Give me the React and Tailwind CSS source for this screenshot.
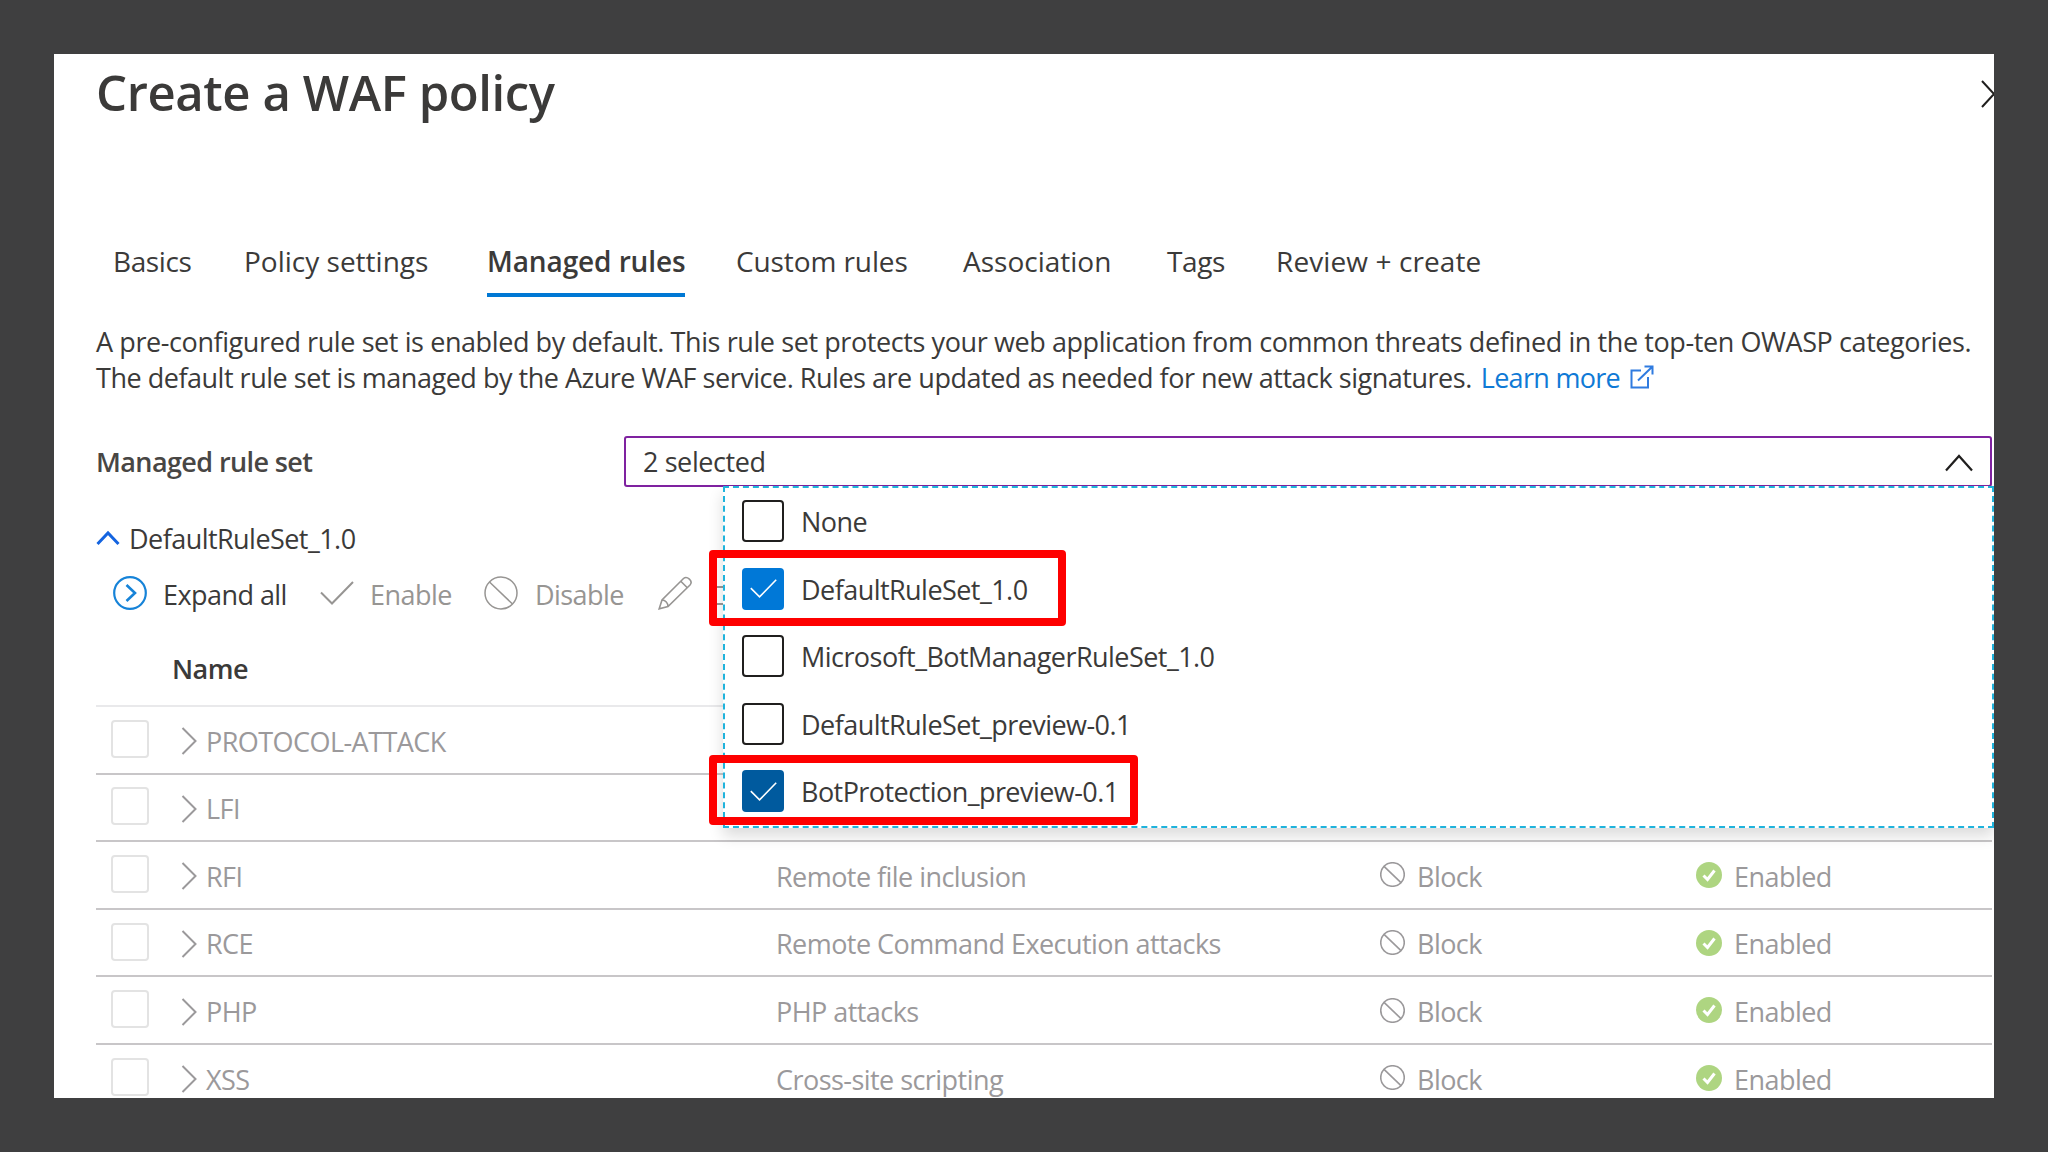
import { useState } from "react";
import clsx from "clsx";

const tabs = [
  { label: "Basics", width: "w-[131px] tracking-[-0.4px]" },
  { label: "Policy settings", width: "w-[243px]" },
  { label: "Managed rules", width: "w-[249px]" },
  { label: "Custom rules", width: "w-[227px] tracking-[-0.1px]" },
  { label: "Association", width: "w-[204px]" },
  { label: "Tags", width: "w-[109px] tracking-[-0.4px]" },
  { label: "Review + create", width: "w-[220px] tracking-[0.1px]" },
];

const ruleSets = [
  { name: "None", checked: false },
  { name: "DefaultRuleSet_1.0", checked: true, color: "bg-[#0078d7]" },
  { name: "Microsoft_BotManagerRuleSet_1.0", checked: false },
  { name: "DefaultRuleSet_preview-0.1", checked: false },
  { name: "BotProtection_preview-0.1", checked: true, color: "bg-[#005a9e]" },
];

const rules = [
  { name: "PROTOCOL-ATTACK" },
  { name: "LFI" },
  { name: "RFI", description: "Remote file inclusion" },
  { name: "RCE", description: "Remote Command Execution attacks" },
  { name: "PHP", description: "PHP attacks" },
  { name: "XSS", description: "Cross-site scripting" },
];

function BlockIcon({ className, strokeWidth }) {
  return (
    <svg viewBox="0 0 34 34" fill="none" stroke="currentColor" strokeWidth={strokeWidth} className={className}>
      <circle cx="17" cy="17" r="16" />
      <path d="M5.5 6 28.5 28" />
    </svg>
  );
}

function CheckIcon({ className }) {
  return (
    <svg viewBox="0 0 34 24" fill="none" stroke="currentColor" strokeWidth="2" className={className}>
      <path d="M1 11.5 12 22.5 33 1" />
    </svg>
  );
}

function Toolbar() {
  return (
    <div className="flex h-[70px] shrink-0 items-center pl-[17px] text-[#979593]">
      <svg viewBox="0 0 34 34" fill="none" stroke="#1683d8" strokeWidth="2.2" className="size-[34px]">
        <circle cx="17" cy="17" r="15.8" />
        <path d="M13.5 9 22 17l-8.500 8" strokeWidth="2.6" />
      </svg>
      <span className="ml-[16px] w-[157px] pt-[5px] text-[#3b3a39]">Expand all</span>
      <CheckIcon className="h-6 w-[34px]" />
      <span className="ml-[16px] w-[114px] pt-[5px]">Enable</span>
      <BlockIcon className="size-[34px]" strokeWidth="1.5" />
      <span className="ml-[17px] w-[123px] pt-[5px]">Disable</span>
      <svg viewBox="0 0 34 34" fill="none" stroke="currentColor" strokeWidth="1.6" className="size-[34px]">
        <path d="M1.200 32.800 4 24 25.500 2.500C29 -.5 35.500 5 32 9L10 30.500ZM4 24c3.500 0 6 3 6 6.500M22.800 5.200l6.500 6.500" />
      </svg>
      {/* first glyph of the next command, mostly covered by the open menu */}
      <svg viewBox="0 0 32 20" fill="none" stroke="#797775" strokeWidth="1.500" className="ml-[18px] mt-[4px] h-5 w-8">
        <path d="M1 2h30v17H1z" />
      </svg>
    </div>
  );
}

function RuleRow({ name, description }) {
  return (
    <div className="flex h-[67.600px] shrink-0 items-center border-b-2 border-[#c8c6c8] pl-[15px] text-[#9b999b]">
      <span className="mb-[2px] size-[38px] rounded-[4px] border-2 border-[#e3e3e3]"></span>
      <svg viewBox="0 0 16 28" fill="none" stroke="currentColor" strokeWidth="2" className="ml-[32px] mt-[3px] h-7 w-4">
        <path d="M1.500 1 14.500 14 1.500 27" />
      </svg>
      <span className="ml-[9px] w-[570px] pt-[4px]">{name}</span>
      <span className="w-[604px] pt-[4px]">{description}</span>
      <BlockIcon className="size-[25px]" strokeWidth="2.200" />
      <span className="ml-[12px] w-[279px] pt-[4px]">Block</span>
      <svg viewBox="0 0 26 26" className="size-[26px]">
        <circle cx="13" cy="13" r="13" fill="#aed581" />
        <path d="M7.500 13.500 11.500 17.500 18.500 8.500" fill="none" stroke="#fff" strokeWidth="3" />
      </svg>
      <span className="ml-[12px] pt-[4px]">Enabled</span>
    </div>
  );
}

function RuleSetMenu({ items, onToggle }) {
  return (
    <div className="absolute left-[97px] top-[48px] z-10 h-[342px] w-[1271px] border-2 border-dashed border-[#1fb3dc] bg-white pl-[17px] pt-[12px] shadow-[0_8px_14px_rgba(0,0,0,0.14)]">
      {items.map((item, i) => (
        <div key={item.name} onClick={() => onToggle(i)} className="flex h-[67.600px] items-start">
          <span
            className={clsx(
              "flex size-[42px] items-center justify-center rounded-[4px]",
              item.checked ? item.color : "border-2 border-[#201f1e]"
            )}
          >
            {item.checked && <CheckIcon className="w-[27px] text-white" />}
          </span>
          <span className="ml-[17px] leading-[44px]">{item.name}</span>
        </div>
      ))}
      {/* callouts around the two rule sets to pick */}
      <div className="absolute left-[-16px] top-[62px] h-[76px] w-[357px] rounded-[4px] border-8 border-[#fe0000]"></div>
      <div className="absolute left-[-16px] top-[267px] h-[70px] w-[429px] rounded-[4px] border-8 border-[#fe0000]"></div>
    </div>
  );
}

export default function App() {
  const [items, setItems] = useState(ruleSets);

  const toggle = (index) => {
    setItems(items.map((item, i) => (i === index ? { ...item, checked: !item.checked, color: "bg-[#0078d7]" } : item)));
  };

  return (
    <div className="h-[1152px] w-[2048px] bg-[#3f3f40] p-[54px] font-['Open_Sans','Noto_Sans',sans-serif] text-[27px] tracking-[-0.55px] text-[#3b3a39]">
      <div className="flex h-[1044px] w-[1940px] flex-col overflow-hidden whitespace-nowrap bg-white pl-[42px]">
        <header className="flex h-[68px] shrink-0 items-start justify-between pt-[8px]">
          <h1 className="text-[49px] font-semibold leading-[60px] tracking-[-0.4px]">Create a WAF policy</h1>
          <svg viewBox="0 0 26 28" fill="none" stroke="#201f1e" strokeWidth="2" className="mr-[-13px] mt-[18px] h-7 w-[26px]">
            <path d="M1 1 25 27M25 1 1 27" />
          </svg>
        </header>

        <nav className="mt-[107px] flex h-[68px] shrink-0 pl-[17px] text-[28px] tracking-normal">
          {tabs.map((tab) => (
            <div key={tab.label} className={tab.width}>
              {tab.label === "Managed rules" ? (
                <span className="inline-block h-[68px] w-[198px] border-b-4 border-[#0078d4] font-semibold leading-[64px] tracking-[-0.1px]">
                  {tab.label}
                </span>
              ) : (
                <span className="leading-[64px]">{tab.label}</span>
              )}
            </div>
          ))}
        </nav>

        <p className="mt-[27px] leading-[36px] tracking-[-0.41px]">
          A pre-configured rule set is enabled by default. This rule set protects your web application from common
          threats defined in the top-ten OWASP categories.
          <br />
          <span className="tracking-[-0.48px]">
            The default rule set is managed by the Azure WAF service. Rules are updated as needed for new attack
            signatures.
          </span>
          <a className="ml-[9px] tracking-[-0.7px] text-[#0f7ad6]">Learn more</a>
          <svg viewBox="0 0 24 24" fill="none" stroke="#2f7be0" strokeWidth="2" className="ml-[10px] inline-block size-6 align-[-1px]">
            <path d="M11 5.500H1.500V22.500H18V12M8 15.500 22 2M14.500 1.500H22.500V9.500" />
          </svg>
        </p>

        <div className="mt-[40px] flex h-[51px] shrink-0 items-center">
          <span className="w-[528px] pt-[2px] font-semibold tracking-[-0.6px] text-[#484644]">Managed rule set</span>
          <div className="relative flex h-[51px] w-[1368px] items-center justify-between rounded-[3px] border-2 border-[#7f22a0] pl-[17px] pr-[17px]">
            <span className="pt-[2px] tracking-[-0.4px]">2 selected</span>
            <svg viewBox="0 0 28 18" fill="none" stroke="#201f1e" strokeWidth="2.200" className="mt-[3px] h-[18px] w-7">
              <path d="M1 16.500 14 2 27 16.500" />
            </svg>
            <RuleSetMenu items={items} onToggle={toggle} />
          </div>
        </div>

        <div className="mt-[31px] flex h-10 shrink-0 items-center">
          <svg viewBox="0 0 24 16" fill="none" stroke="#1464e0" strokeWidth="3" className="h-4 w-6">
            <path d="M1.500 14 12 3 22.500 14" />
          </svg>
          <span className="ml-[9px] pt-[2px]">DefaultRuleSet_1.0</span>
        </div>

        <Toolbar />

        <div className="flex h-[79px] w-[1896px] shrink-0 items-center border-b-2 border-[#e9e9eb] pl-[76px] pt-[6px] font-semibold">
          Name
        </div>
        <div className="w-[1896px]">
          {rules.map((rule) => (
            <RuleRow key={rule.name} {...rule} />
          ))}
        </div>
      </div>
    </div>
  );
}
